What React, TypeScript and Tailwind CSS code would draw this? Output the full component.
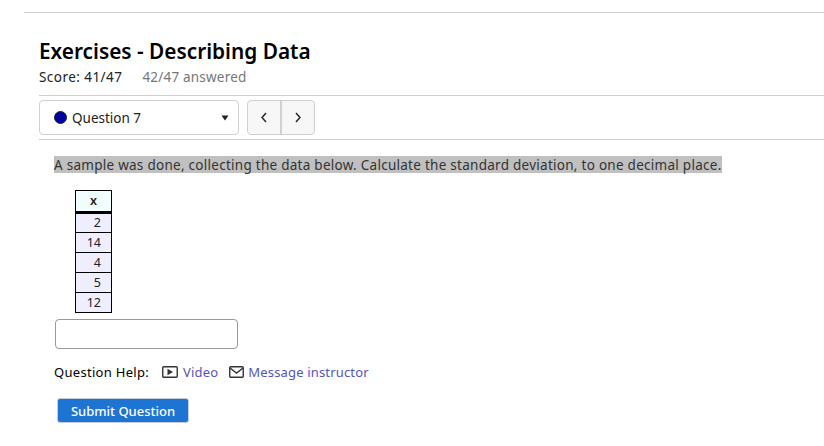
import React from "react";

const rows = [2, 14, 4, 5, 12];

const App = () => {
  return (
    <div className="w-[824px] h-[446px] overflow-hidden bg-white pt-3 pl-6 text-[14px] text-[#222] font-['Noto_Sans',sans-serif]">
      <div className="border-t border-[#cfcfcf] pt-[25px] pl-[15px]">
        <h1 className="text-[20.8px] leading-[26px] font-semibold text-black">Exercises - Describing Data</h1>
        <div className="flex h-[21px] mt-[2px] pt-[2px] items-center text-[13.5px] tracking-[0.2px]">
          <span className="tracking-[0.45px]">Score: 41/47</span>
          <span className="ml-[20px] text-[#777]">42/47 answered</span>
        </div>
        <div className="border-t border-[#cfcfcf] mt-[8px] flex gap-2 pt-1 pb-1 border-b">
          <div className="w-[200px] h-[35px] bg-white border border-[#d0d0d0] rounded flex items-center pl-[14px] pr-[9px]">
            <span className="w-[13px] h-[13px] rounded-full bg-[#00009c] border border-[#222]" />
            <span className="ml-[5px] pt-[2px] flex-1 text-[13.5px]">Question 7</span>
            <svg width="8" height="6" viewBox="0 0 8 6"><path d="M0.5 0.5h7L4 5.5z" fill="#222" /></svg>
          </div>
          <div className="w-[68px] h-[35px] flex bg-[#f7f7f7] border border-[#d0d0d0] rounded">
            <div className="flex-1 flex items-center justify-center border-r-2 border-[#d0d0d0]">
              <svg width="8" height="11" viewBox="0 0 8 11" fill="none"><path d="M6 1L2 5.5L6 10" stroke="#222" strokeWidth="1.4" /></svg>
            </div>
            <div className="flex-1 flex items-center justify-center">
              <svg width="8" height="11" viewBox="0 0 8 11" fill="none"><path d="M2 1L6 5.5L2 10" stroke="#222" strokeWidth="1.4" /></svg>
            </div>
          </div>
        </div>
        <div className="pl-[15px]">
          <p className="mt-4 h-[17px] leading-[19px] w-fit bg-[#c0c0c0] text-[13.5px] text-[#333] tracking-[0.27px] whitespace-nowrap">
            A sample was done, collecting the data below. Calculate the standard deviation, to one decimal place.
          </p>
          <table className="ml-[21px] mt-[17px] w-[37px] border-collapse border border-black text-[12.5px] leading-[18px] text-[#222]">
            <thead>
              <tr>
                <th className="h-[22px] bg-[#f0fffe] border border-black border-b-[3px] font-semibold text-center text-[12.5px]">x</th>
              </tr>
            </thead>
            <tbody>
              {rows.map((r) => (
                <tr key={r}>
                  <td className="h-5 p-0 pr-[10px] bg-[#eeeeff] border border-black text-right">{r}</td>
                </tr>
              ))}
            </tbody>
          </table>
          <input className="block mt-[6px] ml-[1px] w-[183px] h-[30px] bg-white border border-[#999] rounded" />
          <div className="flex items-center mt-[13px] h-[20px] text-[13px] tracking-[0.17px]">
            <span className="text-black tracking-[0.3px] pt-[2px]">Question Help:</span>
            <svg className="ml-[13px]" width="16" height="12" viewBox="0 0 16 12" fill="none">
              <rect x="0.75" y="0.75" width="14.5" height="10.5" rx="1" stroke="#333" strokeWidth="1.4" />
              <path d="M5.5 2.8L11 6L5.5 9.2z" fill="#333" />
            </svg>
            <span className="ml-[5px] pt-[2px] text-[#5555bb]">Video</span>
            <svg className="ml-[11px]" width="15" height="12" viewBox="0 0 15 12" fill="none">
              <rect x="0.75" y="0.75" width="13.5" height="10.5" rx="1" stroke="#333" strokeWidth="1.4" />
              <path d="M1 2L7.5 7L14 2" stroke="#333" strokeWidth="1.4" />
            </svg>
            <span className="ml-[4px] pt-[2px] text-[#5555bb]">Message instructor</span>
          </div>
          <button className="block mt-[16px] ml-[3px] pt-[2px] w-[132px] h-[25px] rounded-[3px] bg-[#1e74d2] border border-[#c4cdd8] text-white text-[13px] font-medium">
            Submit Question
          </button>
        </div>
      </div>
    </div>
  );
};

export default App;
